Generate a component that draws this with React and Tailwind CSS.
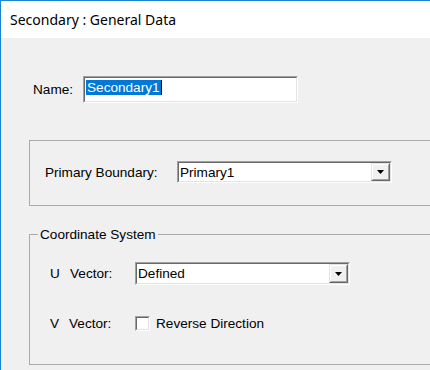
import React from 'react';

// classic Win32 sunken edge (outer + inner)
const Sunken = ({ className = '', children }) => (
  <div className={`border border-t-[#a0a0a0] border-l-[#a0a0a0] border-b-white border-r-white ${className}`}>
    <div className="h-full w-full border border-t-[#696969] border-l-[#696969] border-b-[#e3e3e3] border-r-[#e3e3e3] bg-white flex items-center">
      {children}
    </div>
  </div>
);

const ComboBox = ({ value, className = '' }) => (
  <Sunken className={className}>
    <span className="flex-1 pl-[1px] text-[13.6px] leading-[15px] text-black">{value}</span>
    <div className="h-full w-[19px] border border-t-[#e3e3e3] border-l-[#e3e3e3] border-b-[#696969] border-r-[#696969]">
      <div className="h-full w-full border border-t-white border-l-white border-b-[#a0a0a0] border-r-[#a0a0a0] bg-[#f0f0f0] flex items-center justify-center">
        <svg width="7" height="4" viewBox="0 0 7 4">
          <path d="M0 0h7L3.5 4z" fill="#000" />
        </svg>
      </div>
    </div>
  </Sunken>
);

export default function App() {
  return (
    <div className="w-[430px] h-[370px] overflow-hidden flex flex-col border-l border-t border-[#1883d7] font-['Liberation_Sans',Arial,sans-serif] text-black">
      <div className="h-[37px] shrink-0 bg-white flex items-center pl-[9px] text-[14px] font-['Noto_Sans',sans-serif] text-black">
        Secondary : General Data
      </div>

      <div className="flex-1 bg-[#f0f0f0] pl-[28px] text-[13.6px] leading-[15px]">
        {/* name */}
        <div className="mt-[38px] flex items-center h-[27px]">
          <span className="ml-[4px] w-[50px]">Name:</span>
          <Sunken className="w-[215px] h-[27px]">
            <div className="self-start mt-[2px] ml-[1px] flex items-center">
              <span className="bg-[#0078d7] text-white px-[1px]">Secondary1</span>
              <span className="w-px h-[15px] bg-black" />
            </div>
          </Sunken>
        </div>

        {/* primary boundary group */}
        <div className="mt-[37px] w-[420px] h-[66px] border border-[#a9a9a9] pl-[15px] pt-[20px]">
          <div className="flex items-center">
            <span className="w-[132px]">Primary Boundary:</span>
            <ComboBox value="Primary1" className="w-[215px] h-[22px]" />
          </div>
        </div>

        {/* coordinate system group */}
        <fieldset className="mt-[21px] w-[420px] h-[138px] border border-[#a9a9a9] p-0 m-0">
          <legend className="ml-[8px] px-[2px]">Coordinate System</legend>
          <div className="mt-[20px] pl-[20px] flex items-center">
            <span className="w-[20px]">U</span>
            <span className="w-[65px]">Vector:</span>
            <ComboBox value="Defined" className="w-[215px] h-[23px]" />
          </div>
          <div className="mt-[31px] pl-[20px] flex items-center">
            <span className="w-[19px]">V</span>
            <span className="w-[66px]">Vector:</span>
            <Sunken className="w-[15px] h-[15px]" />
            <span className="ml-[6px]">Reverse Direction</span>
          </div>
        </fieldset>
      </div>
    </div>
  );
}
